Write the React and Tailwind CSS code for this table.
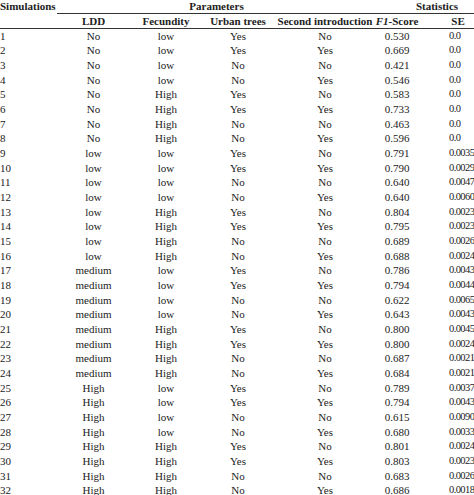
import React from "react";

const rows = [
  ["1", "No", "low", "Yes", "No", "0.530", "0.0"],
  ["2", "No", "low", "Yes", "Yes", "0.669", "0.0"],
  ["3", "No", "low", "No", "No", "0.421", "0.0"],
  ["4", "No", "low", "No", "Yes", "0.546", "0.0"],
  ["5", "No", "High", "Yes", "No", "0.583", "0.0"],
  ["6", "No", "High", "Yes", "Yes", "0.733", "0.0"],
  ["7", "No", "High", "No", "No", "0.463", "0.0"],
  ["8", "No", "High", "No", "Yes", "0.596", "0.0"],
  ["9", "low", "low", "Yes", "No", "0.791", "0.0035"],
  ["10", "low", "low", "Yes", "Yes", "0.790", "0.0029"],
  ["11", "low", "low", "No", "No", "0.640", "0.0047"],
  ["12", "low", "low", "No", "Yes", "0.640", "0.0060"],
  ["13", "low", "High", "Yes", "No", "0.804", "0.0023"],
  ["14", "low", "High", "Yes", "Yes", "0.795", "0.0023"],
  ["15", "low", "High", "No", "No", "0.689", "0.0026"],
  ["16", "low", "High", "No", "Yes", "0.688", "0.0024"],
  ["17", "medium", "low", "Yes", "No", "0.786", "0.0043"],
  ["18", "medium", "low", "Yes", "Yes", "0.794", "0.0044"],
  ["19", "medium", "low", "No", "No", "0.622", "0.0065"],
  ["20", "medium", "low", "No", "Yes", "0.643", "0.0043"],
  ["21", "medium", "High", "Yes", "No", "0.800", "0.0045"],
  ["22", "medium", "High", "Yes", "Yes", "0.800", "0.0024"],
  ["23", "medium", "High", "No", "No", "0.687", "0.0021"],
  ["24", "medium", "High", "No", "Yes", "0.684", "0.0021"],
  ["25", "High", "low", "Yes", "No", "0.789", "0.0037"],
  ["26", "High", "low", "Yes", "Yes", "0.794", "0.0043"],
  ["27", "High", "low", "No", "No", "0.615", "0.0090"],
  ["28", "High", "low", "No", "Yes", "0.680", "0.0033"],
  ["29", "High", "High", "Yes", "No", "0.801", "0.0024"],
  ["30", "High", "High", "Yes", "Yes", "0.803", "0.0023"],
  ["31", "High", "High", "No", "No", "0.683", "0.0026"],
  ["32", "High", "High", "No", "Yes", "0.686", "0.0018"],
];

const cols = "grid grid-cols-[57px_73px_72px_72px_102px_42px_80px]";

export default function App() {
  return (
    <div className="w-[474px] h-[495px] overflow-hidden bg-white text-[#222] font-['Liberation_Serif',serif] text-[11px] whitespace-nowrap">
      <div className="w-[498px]">
        <div className={`${cols} h-[14px] font-bold leading-[12px]`}>
          <div className="text-left">Simulations</div>
          <div className="col-span-4 text-center border-b border-[#333]">Parameters</div>
          <div className="col-span-2 text-center border-b border-[#333]">Statistics</div>
        </div>
        <div className={`${cols} h-[14.5px] font-bold leading-[14px] border-b border-[#333]`}>
          <div></div>
          <div className="text-center">LDD</div>
          <div className="text-center">Fecundity</div>
          <div className="text-center">Urban trees</div>
          <div className="text-center">Second introduction</div>
          <div className="flex justify-center">
            <span className="italic">F1</span>-Score
          </div>
          <div className="text-center">SE</div>
        </div>
        {rows.map((r) => (
          <div key={r[0]} className={`${cols} h-[14.68px] leading-[14.68px]`}>
            <div className="text-left">{r[0]}</div>
            <div className="text-center">{r[1]}</div>
            <div className="text-center">{r[2]}</div>
            <div className="text-center">{r[3]}</div>
            <div className="text-center">{r[4]}</div>
            <div className="text-center">{r[5]}</div>
            <div className="text-left pl-[31px] text-[10.5px] tracking-[-0.6px]">{r[6]}</div>
          </div>
        ))}
      </div>
    </div>
  );
}
